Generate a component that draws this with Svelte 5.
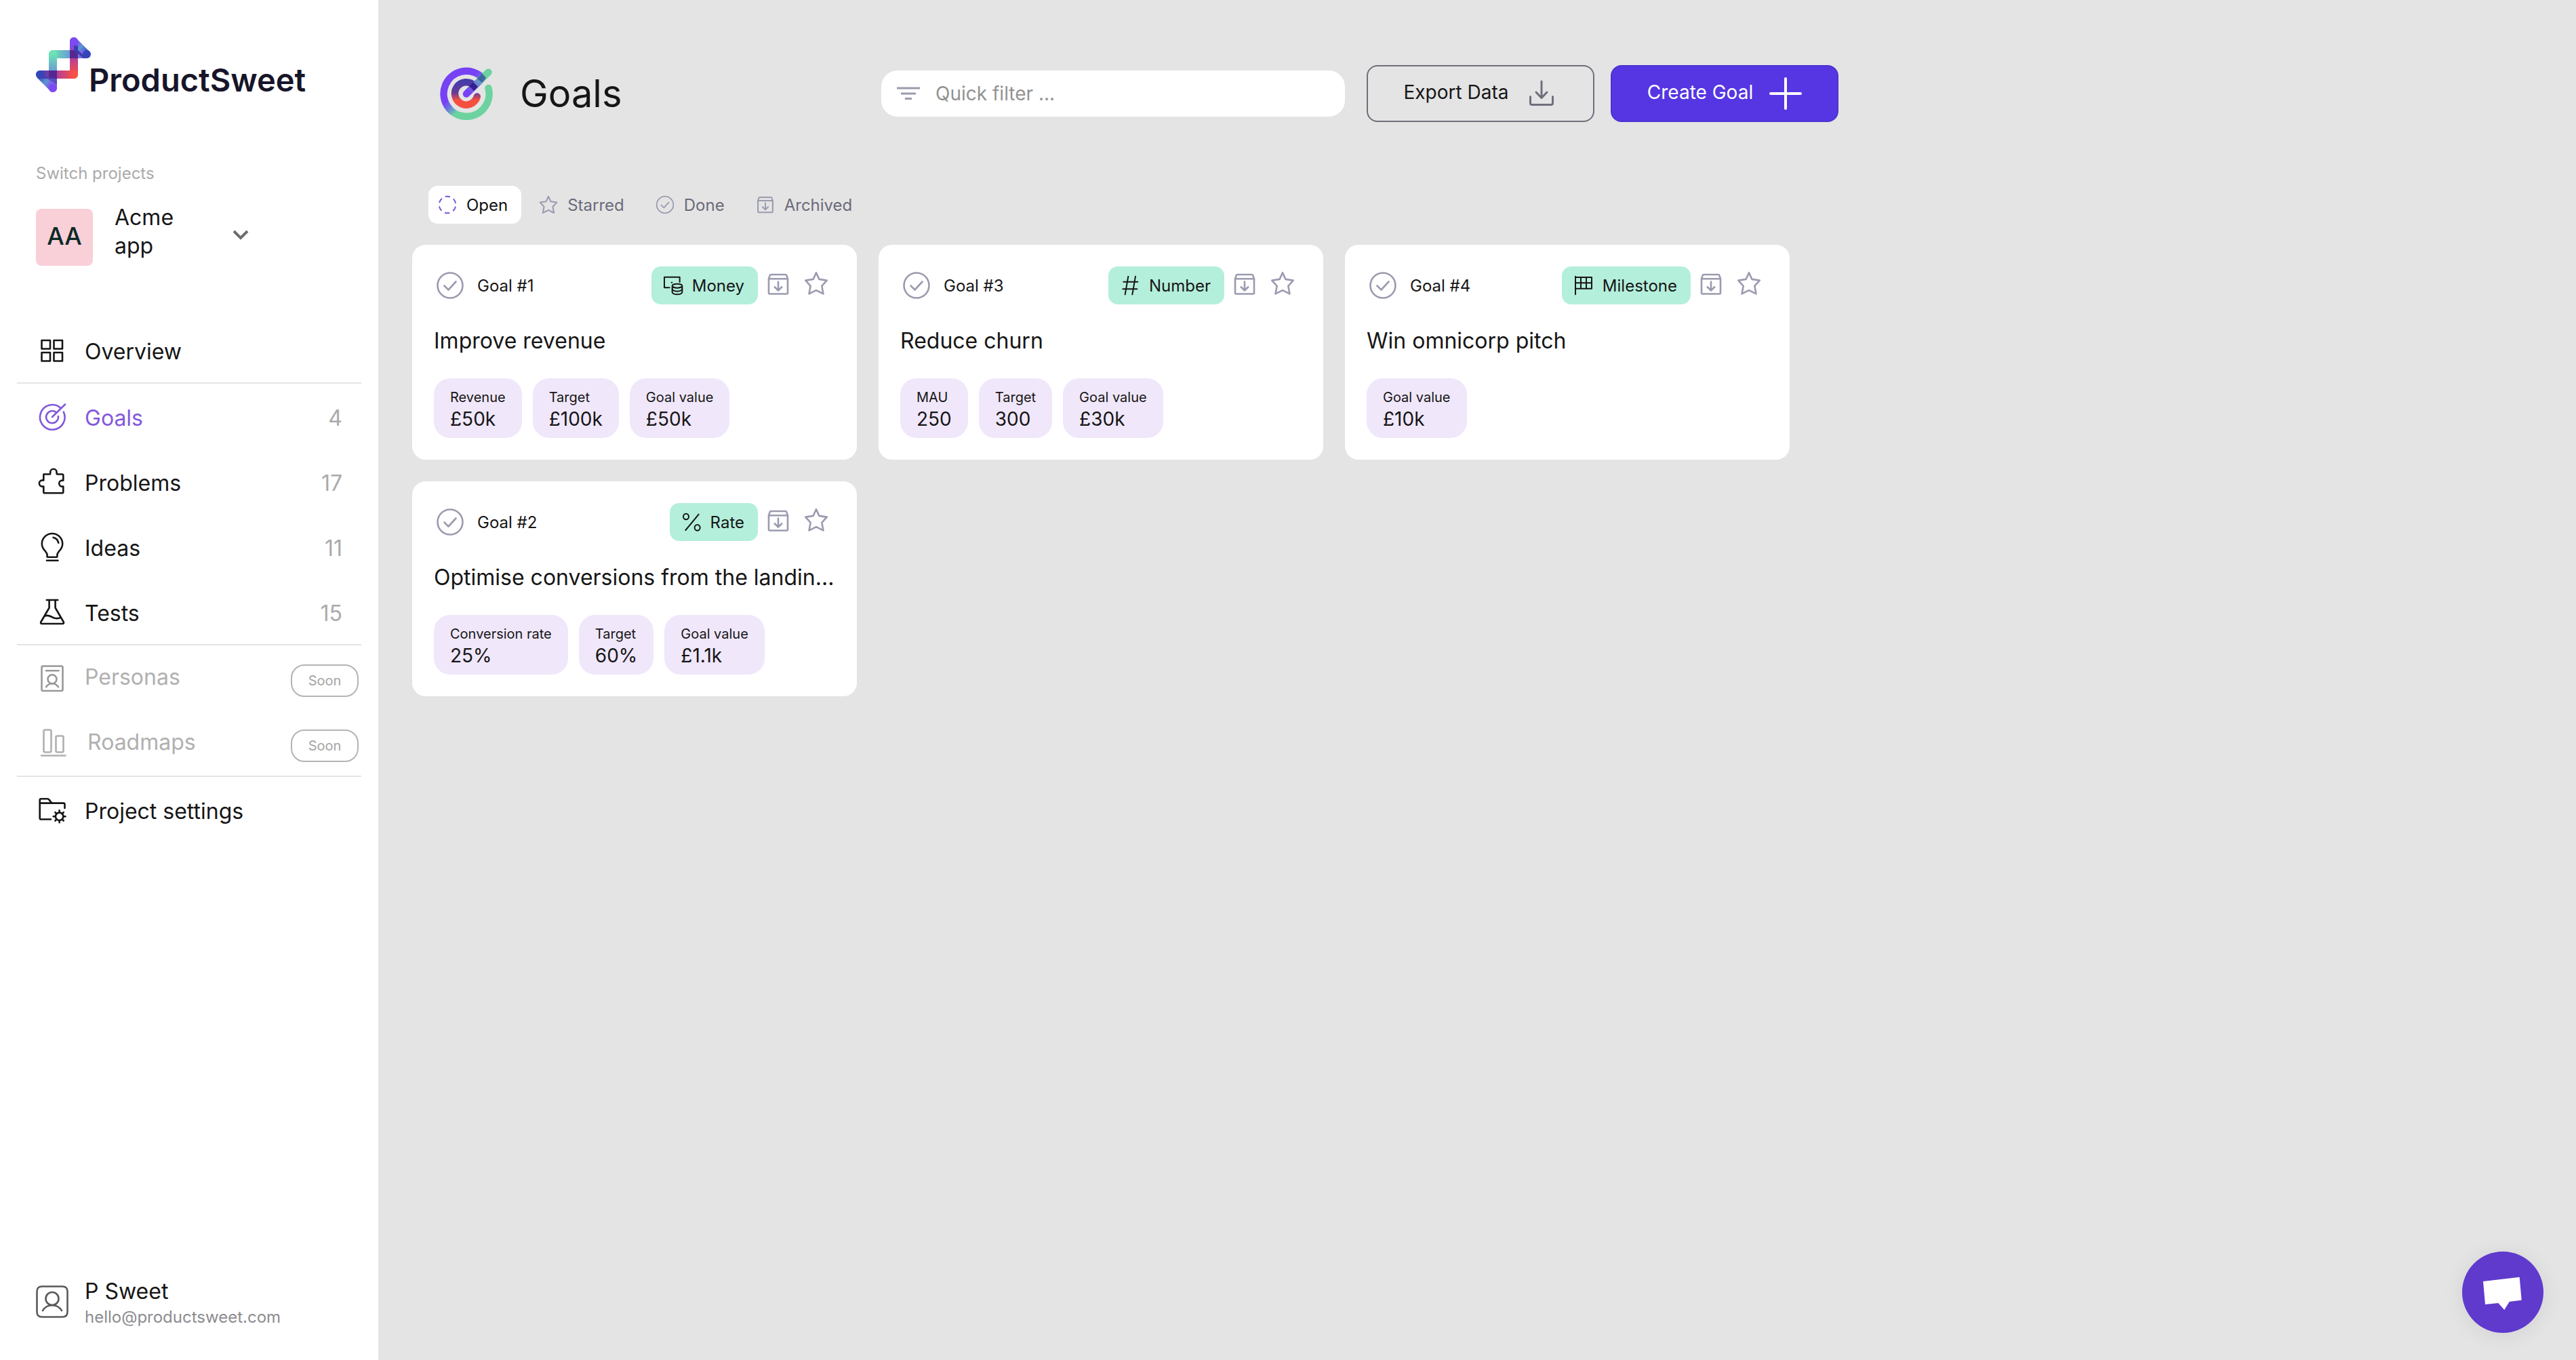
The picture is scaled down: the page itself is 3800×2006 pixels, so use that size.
<script>
  // Line icons, drawn on a 48px grid
  const icons = {
    overview: [
      'M8.5 8h12.5v12.5h-12.5z', 'M26.5 8h12.5v12.5h-12.5z',
      'M8.5 26h12.5v12.5h-12.5z', 'M26.5 26h12.5v12.5h-12.5z'
    ],
    goals: [
      'M36 9.4A18.3 18.3 0 1 0 40.8 15.6',
      'M29.4 15.8A9 9 0 1 0 33 22',
      'M24 23L43 4.5'
    ],
    problems: [
      'M11.5 11.5h8.5q1.2 0 1.2 -1.2v-1.8a4.7 4.7 0 0 1 9.4 0v1.8q0 1.2 1.2 1.2h7q1.5 0 1.5 1.5v7.6h-1.6a4.5 4.5 0 0 0 0 9h1.6v8.1q0 1.5 -1.5 1.5h-26q-1.5 0 -1.5 -1.5v-8.1h-1.8a4.6 4.6 0 0 1 0 -9.2h1.8v-7.7q0 -1.2 1.2 -1.2z'
    ],
    ideas: [
      'M16.6 37.5V34q0 -1.5 -2.6 -4.8C10.500 25.500 8.800 22.500 8.800 18.200A15.200 15.200 0 0 1 39.200 18.200C39.200 22.500 37.500 25.500 34 29.200Q31.400 32.500 31.400 34V36.500q0 1.200 -1.200 1.200H17.800q-1.200 0 -1.200 -1.200',
      'M16 42.700h16.500',
      'M25.500 8.800q6.500 1.500 7.800 8'
    ],
    tests: [
      'M15.800 5h16.500',
      'M19.600 5v11.500L7.300 37.500q-.9 2.500 1.500 2.500h30.500q2.400 0 1.500 -2.500L28.600 16.500V5',
      'M13.500 28.500c6 -2.500 9 2 14 3.200q4 .9 7.500 -.3'
    ],
    personas: [
      'M10.500 8.500h27q2 0 2 2v32.500q0 2 -2 2h-27q-2 0 -2 -2v-32.500q0 -2 2 -2z',
      'M15 15.200h18.500',
      'M17.500 27.800a6.500 6.500 0 1 0 13 0a6.500 6.500 0 1 0 -13 0',
      'M15 39.200q3.500 -5 9 -5t9 5'
    ],
    roadmaps: [
      'M13.500 6.500h7q2 0 2 2v29q0 2 -2 2h-7q-2 0 -2 -2v-29q0 -2 2 -2z',
      'M31.500 15.500h7q2 0 2 2v20q0 2 -2 2h-7q-2 0 -2 -2v-20q0 -2 2 -2z',
      'M8 44.500h35.500'
    ],
    settings: [
      'M22 36.500H7.500q-1.800 0 -1.800 -1.800V8q0 -1.800 1.800 -1.800h9.500q1.500 0 2.500 1.400l3.800 5',
      'M6 12.600h34.500q2 0 2 2V20',
      'M28.900 32.300a5.700 5.700 0 1 0 11.400 0a5.700 5.700 0 1 0 -11.400 0',
      'M34.600 26.500v-3.200M34.600 38v3.200M28.900 32.300h-3.200M40.300 32.300h3.200M30.600 28.300l-2.200 -2.200M38.600 28.300l2.200 -2.200M30.600 36.300l-2.200 2.200M38.600 36.300l2.200 2.200'
    ],
    user: [
      'M9 1.500h30q7.500 0 7.500 7.500v30q0 7.500 -7.500 7.500h-30q-7.500 0 -7.500 -7.500v-30q0 -7.500 7.500 -7.500z',
      'M14.500 19.500a9.500 9.500 0 1 0 19 0a9.500 9.500 0 1 0 -19 0',
      'M10 37.200q4.500 -8 14 -8t14 8'
    ],
    open: ['M42.500 24a18.500 18.500 0 1 1 -37 0a18.500 18.500 0 1 1 37 0'],
    check: [
      'M42.500 24a18.500 18.500 0 1 1 -37 0a18.500 18.500 0 1 1 37 0',
      'M15.500 24.500l6 6l11 -12'
    ],
    archive: [
      'M10 14.300h28V35q0 1.500 -1.500 1.500h-25q-1.500 0 -1.500 -1.500z',
      'M10 14.300l1.700 -5.100q.4 -1.200 1.700 -1.200h21.200q1.300 0 1.700 1.200l1.700 5.100',
      'M24 18.500v12.500M18.700 26.300l5.300 5.200l5.300 -5.200'
    ],
    star: [
      'M24 5.200L28.400 14.900L39.700 16.600L32.300 24.800L34.500 36.400L24 31.200L13.500 36.400L15.700 24.800L8.300 16.600L19.600 14.900z'
    ],
    money: [
      'M16 29H4.500V5.500h34v11',
      'M20.500 17.500h1',
      'M22 25a11 4.500 0 1 0 22 0a11 4.500 0 1 0 -22 0v14a11 5 0 0 0 22 0v-14',
      'M22 32a11 5 0 0 0 22 0'
    ],
    number: ['M20 4l-7 40M36 4l-7 40M9.500 16h31.500M8 32h31.500'],
    rate: [
      'M40 7L11 42',
      'M6 12a6 6.500 0 1 0 12 0a6 6.500 0 1 0 -12 0',
      'M31 36.500a6 6.500 0 1 0 12 0a6 6.500 0 1 0 -12 0'
    ],
    milestone: ['M6 4v40M6 6h36v25H6M18 6v25M30 6v25M6 18.500h36'],
    export: ['M24 6v24M16 22l8 8.500l8 -8.500', 'M7.500 28.500V38q0 2.500 2.500 2.500h28q2.500 0 2.500 -2.500v-9.500'],
    plus: ['M24 2v44M2 24h44'],
    filter: ['M1 12h34M7 20h22M13 27.500h10']
  };

  const nav = [
    { icon: 'overview', label: 'Overview', line: true },
    { icon: 'goals', label: 'Goals', count: 4, active: true },
    { icon: 'problems', label: 'Problems', count: 17 },
    { icon: 'ideas', label: 'Ideas', count: 11 },
    { icon: 'tests', label: 'Tests', count: 15, line: true },
    { icon: 'personas', label: 'Personas', soon: true },
    { icon: 'roadmaps', label: 'Roadmaps', soon: true, line: true },
    { icon: 'settings', label: 'Project settings' }
  ];

  const tabs = [
    { icon: 'open', label: 'Open', box: '3 3 42 42' },
    { icon: 'star', label: 'Starred', box: '6 3 36 36' },
    { icon: 'check', label: 'Done', box: '3 3 42 42' },
    { icon: 'archive', label: 'Archived', box: '6 4 36 36' }
  ];

  const goals = [
    {
      id: 1, type: 'Money', icon: 'money', title: 'Improve revenue',
      stats: [['Revenue', '£50k'], ['Target', '£100k'], ['Goal value', '£50k']]
    },
    {
      id: 3, type: 'Number', icon: 'number', title: 'Reduce churn',
      stats: [['MAU', '250'], ['Target', '300'], ['Goal value', '£30k']]
    },
    {
      id: 4, type: 'Milestone', icon: 'milestone', title: 'Win omnicorp pitch',
      stats: [['Goal value', '£10k']]
    },
    {
      id: 2, type: 'Rate', icon: 'rate', title: 'Optimise conversions from the landin...',
      stats: [['Conversion rate', '25%'], ['Target', '60%'], ['Goal value', '£1.1k']]
    }
  ];

  let current = $state('Open');
  let search = $state('');
</script>

{#snippet icon(name, box = '0 0 48 48')}
  <svg class="icon {name}" viewBox={box} aria-hidden="true">
    {#each icons[name] as d}
      <path {d} />
    {/each}
  </svg>
{/snippet}

<div class="app">
  <aside>
    <a class="logo" href="#home">
      <svg viewBox="0 0 82 82" aria-hidden="true">
        <defs>
          <linearGradient id="l1" gradientUnits="userSpaceOnUse" x1="25" y1="25" x2="75" y2="25">
            <stop offset="0" stop-color="#6be3b4" /><stop offset=".5" stop-color="#6a9bd4" /><stop offset="1" stop-color="#8050f0" />
          </linearGradient>
          <linearGradient id="l2" gradientUnits="userSpaceOnUse" x1="25" y1="25" x2="25" y2="75">
            <stop offset="0" stop-color="#6be3b4" /><stop offset=".5" stop-color="#6a9bd4" /><stop offset="1" stop-color="#8050f0" />
          </linearGradient>
          <linearGradient id="l3" gradientUnits="userSpaceOnUse" x1="56" y1="6" x2="56" y2="55">
            <stop offset=".1" stop-color="#7c4af0" /><stop offset=".5" stop-color="#b43f9c" /><stop offset="1" stop-color="#fa5040" />
          </linearGradient>
          <linearGradient id="l4" gradientUnits="userSpaceOnUse" x1="6" y1="55" x2="56" y2="55">
            <stop offset="0" stop-color="#3440b0" /><stop offset=".5" stop-color="#b43f9c" /><stop offset="1" stop-color="#fa5040" />
          </linearGradient>
          <linearGradient id="l5" gradientUnits="userSpaceOnUse" x1="56" y1="6" x2="75" y2="25">
            <stop offset="0" stop-color="#7c4af0" /><stop offset=".5" stop-color="#5f93d6" /><stop offset="1" stop-color="#3346b8" />
          </linearGradient>
          <linearGradient id="l6" gradientUnits="userSpaceOnUse" x1="6" y1="55" x2="25" y2="75">
            <stop offset="0" stop-color="#3346b8" /><stop offset=".5" stop-color="#5f93d6" /><stop offset="1" stop-color="#7c4af0" />
          </linearGradient>
        </defs>
        <path d="M50 6L71 29L79 21L60 2z" fill="url(#l5)" />
        <path d="M2 60L21 79L31 75L31 69L11 51z" fill="url(#l6)" />
        <g fill="none" stroke-width="12" stroke-linecap="round">
          <path d="M25 25H72" stroke="url(#l1)" />
          <path d="M25 25L25.010 75" stroke="url(#l2)" />
          <path d="M56 6L56.010 55" stroke="url(#l3)" />
          <path d="M56 55L6 55.010" stroke="url(#l4)" />
        </g>
        <path d="M50 19h12v12h-12zM19 49h12v12h-12z" fill="#552890" />
        <path d="M56 12L62 13V19L75 31H70L56 19z" fill="#3a3fae" />
        <path d="M6 55L31 61V70L25 66z" fill="#4a3fb0" opacity=".7" />
        <circle cx="56" cy="6" r="6" fill="#7c4af0" />
        <circle cx="75" cy="25" r="6" fill="#3346b8" />
        <circle cx="6" cy="55" r="6" fill="#3346b8" />
        <circle cx="25" cy="75" r="6" fill="#7c4af0" />
      </svg>
      <span>ProductSweet</span>
    </a>

    <p class="hint">Switch projects</p>
    <button class="project">
      <span class="avatar">AA</span>
      <span class="name">Acme app</span>
      <svg class="chevron" viewBox="0 0 24 24" aria-hidden="true"><path d="M2 7l10 10l10 -10" /></svg>
    </button>

    <nav>
      {#each nav as item}
        <a href="#{item.icon}" class:active={item.active} class:soon={item.soon} class:line={item.line}>
          {@render icon(item.icon)}
          <span class="label">{item.label}</span>
          {#if item.count}<span class="count">{item.count}</span>{/if}
          {#if item.soon}<span class="badge">Soon</span>{/if}
        </a>
      {/each}
    </nav>

    <a class="account" href="#account">
      {@render icon('user')}
      <span>
        <strong>P Sweet</strong>
        <small>hello@productsweet.com</small>
      </span>
    </a>
  </aside>

  <main>
    <header>
      <h1>
        <svg viewBox="0 0 78 78" aria-hidden="true">
          <defs>
            <linearGradient id="t1" gradientUnits="userSpaceOnUse" x1="15" y1="40" x2="45" y2="72">
              <stop offset=".1" stop-color="#7742f5" /><stop offset=".35" stop-color="#6c84d8" /><stop offset=".6" stop-color="#6cd3a0" />
            </linearGradient>
            <linearGradient id="t2" gradientUnits="userSpaceOnUse" x1="38" y1="20" x2="38" y2="56">
              <stop offset=".1" stop-color="#4a3ca8" /><stop offset=".5" stop-color="#6a3a98" /><stop offset=".8" stop-color="#f5503f" />
            </linearGradient>
            <linearGradient id="t3" gradientUnits="userSpaceOnUse" x1="39" y1="40" x2="71" y2="6">
              <stop offset=".1" stop-color="#7742f5" /><stop offset=".55" stop-color="#6693c8" /><stop offset=".8" stop-color="#6cd3a0" />
            </linearGradient>
          </defs>
          <g fill="none" stroke-width="10.500" stroke-linecap="round">
            <path d="M71.500 31A33.500 33.500 0 1 1 61 14" stroke="url(#t1)" />
            <path d="M54.800 43.500A16.700 16.700 0 1 1 50.500 27" stroke="url(#t2)" />
            <path d="M39 39.500L71.500 7.500" stroke="url(#t3)" />
          </g>
          <path d="M62 9L68 16L62 23L55 17z" fill="#35589f" opacity=".85" />
          <path d="M49 22L56 29L50 35L43 28z" fill="#35208c" />
        </svg>
        Goals
      </h1>
      <label class="search">
        <svg class="icon" viewBox="0 0 36 40" aria-hidden="true"><path d={icons.filter[0]} /></svg>
        <input type="text" placeholder="Quick filter ..." aria-label="Quick filter" bind:value={search} />
      </label>
      <div class="buttons">
        <button class="btn"><span>Export Data</span>{@render icon('export')}</button>
        <button class="btn primary"><span>Create Goal</span>{@render icon('plus')}</button>
      </div>
    </header>

    <div class="tabs">
      {#each tabs as tab}
        <button class:selected={current === tab.label} onclick={() => (current = tab.label)}>
          {@render icon(tab.icon, tab.box)}
          {tab.label}
        </button>
      {/each}
    </div>

    <div class="cards">
      {#each goals as goal}
        <article>
          <div class="top">
            <button class="tool" aria-label="Mark as done">{@render icon('check')}</button>
            <span class="id">Goal #{goal.id}</span>
            <span class="chip">{@render icon(goal.icon, '3 3 42 42')}{goal.type}</span>
            <div class="tools">
              <button class="tool" aria-label="Archive">{@render icon('archive')}</button>
              <button class="tool" aria-label="Star">{@render icon('star')}</button>
            </div>
          </div>
          <h2>{goal.title}</h2>
          <div class="stats">
            {#each goal.stats as [label, value]}
              <div class="stat"><small>{label}</small><b>{value}</b></div>
            {/each}
          </div>
        </article>
      {/each}
    </div>
  </main>

  <button class="chat" aria-label="Chat">
    <svg viewBox="0 0 120 120" aria-hidden="true">
      <path d="M31 44L84.700 37.700L87.700 71.700L69.700 74L62.300 86L53.300 76L34 78z" />
    </svg>
  </button>
</div>

<style>
  :global(body) {
    background: #e4e4e4;
  }
  .app {
    display: flex;
    min-height: 100vh;
    font-family: Inter, "Liberation Sans", sans-serif;
    font-size: 32px;
    color: #161616;
  }
  .app * {
    box-sizing: border-box;
  }
  button, input {
    font: inherit;
    color: inherit;
    border: none;
    background: none;
    padding: 0;
  }
  button {
    cursor: pointer;
  }
  a {
    color: inherit;
    text-decoration: none;
  }
  svg {
    display: block;
    flex: none;
  }
  .icon {
    width: 48px;
    height: 48px;
    fill: none;
    stroke: currentColor;
    stroke-width: 2.6;
    stroke-linecap: round;
    stroke-linejoin: round;
  }

  aside {
    display: flex;
    flex-direction: column;
    flex: none;
    width: 558px;
    padding: 55px 25px 46px;
    background: #fff;
  }
  .logo {
    display: flex;
    height: 87px;
    padding-left: 28px;
    font-size: 47px;
    font-weight: 600;
    line-height: 48px;
    color: #17152a;
  }
  .logo svg {
    width: 82px;
    height: 82px;
  }
  .logo span {
    align-self: flex-end;
    margin-left: -4px;
  }
  .hint {
    margin: 98px 0 28px;
    padding-left: 28px;
    font-size: 24px;
    line-height: 32px;
    color: #aaa;
  }
  .project {
    display: flex;
    align-items: flex-start;
    height: 92px;
    padding-left: 28px;
    margin-bottom: 76px;
    text-align: left;
  }
  .avatar {
    align-self: flex-end;
    width: 84px;
    height: 84px;
    border-radius: 8px;
    background: #f9d0d8;
    color: #0a2a26;
    font-size: 36px;
    font-weight: 500;
    line-height: 80px;
    text-align: center;
  }
  .name {
    width: 120px;
    margin-left: 32px;
    line-height: 42px;
  }
  .chevron {
    align-self: center;
    width: 24px;
    height: 24px;
    margin-left: 54px;
    fill: none;
    stroke: #6c6c6c;
    stroke-width: 4;
  }
  nav {
    display: flex;
    flex-direction: column;
  }
  nav a {
    display: flex;
    align-items: center;
    gap: 24px;
    height: 96px;
    padding: 4px 28px 0 28px;
  }
  nav a.line {
    height: 98px;
    border-bottom: 2px solid #e4e4e4;
  }
  nav a.soon {
    padding: 0 4px 4px 28px;
    color: #b0b0b0;
  }
  nav .roadmaps {
    margin-right: 4px;
  }
  nav .personas {
    color: #989898;
  }
  .active {
    color: #8359dc;
  }
  .count {
    margin-left: auto;
    color: #aaa;
  }
  .badge {
    width: 100px;
    height: 48px;
    margin: 12px 0 0 auto;
    border: 2px solid #b4b4b4;
    border-radius: 20px;
    font-size: 20px;
    font-weight: 400;
    line-height: 44px;
    text-align: center;
    color: #a4a4a4;
  }
  .account {
    display: flex;
    align-items: center;
    gap: 24px;
    margin-top: auto;
    padding-left: 28px;
  }
  .account .icon {
    margin-bottom: 4px;
    color: #5a5a5a;
  }
  .account strong, .account small {
    display: block;
    font-weight: 400;
    font-size: 32px;
    line-height: 42px;
  }
  .account small {
    font-size: 24px;
    line-height: 34px;
    color: #8c8c90;
  }

  main {
    flex: 1;
    min-width: 0;
    padding: 96px 50px 50px;
  }
  header {
    display: flex;
    align-items: center;
    max-width: 2104px;
  }
  h1 {
    display: flex;
    align-items: center;
    flex: 1;
    gap: 40px;
    margin: 0;
    padding-left: 41px;
    font-size: 56px;
    font-weight: 400;
    line-height: 84px;
  }
  h1 svg {
    width: 78px;
    height: 78px;
  }
  .search {
    display: flex;
    align-items: center;
    flex: 0 1 684px;
    height: 68px;
    margin-right: 32px;
    padding: 0 22px;
    gap: 22px;
    border-radius: 24px;
    background: #fff;
  }
  .search .icon {
    width: 36px;
    height: 40px;
    color: #9b9bb0;
    stroke-width: 3;
    stroke-linecap: butt;
  }
  .search input {
    flex: 1;
    min-width: 0;
    font-size: 28px;
    outline: none;
  }
  .search input::placeholder {
    color: #929292;
    opacity: 1;
  }
  .buttons {
    display: flex;
    gap: 24px;
  }
  .btn {
    display: flex;
    align-items: center;
    justify-content: center;
    gap: 24px;
    width: 336px;
    height: 84px;
    border: 2px solid #6f6f7c;
    border-radius: 16px;
    font-size: 28px;
  }
  .btn span {
    padding-bottom: 4px;
  }
  .btn .icon {
    color: #6f6f7c;
    stroke-width: 3;
  }
  .btn.primary {
    border-color: #4f33d0;
    background: #5536e2;
    color: #fff;
  }
  .btn.primary .icon {
    color: #fff;
    stroke-width: 4;
  }

  .tabs {
    display: flex;
    gap: 12px;
    margin: 94px 0 31px 24px;
  }
  .tabs button {
    display: flex;
    align-items: center;
    gap: 14px;
    height: 56px;
    padding: 0 20px 0 14px;
    border-radius: 14px;
    font-size: 24px;
    color: #6b6b7a;
  }
  .tabs .icon {
    width: 28px;
    height: 28px;
    color: #9b9bb0;
  }
  .tabs .selected {
    background: #fff;
    color: #111;
  }
  .tabs .open {
    color: #7b52e0;
    stroke-width: 3;
    stroke-dasharray: 11 8.370;
    stroke-dashoffset: 15;
    stroke-linecap: butt;
  }

  .cards {
    display: grid;
    grid-template-columns: repeat(3, 1fr);
    gap: 32px;
    max-width: 2032px;
  }
  article {
    min-width: 0;
    padding: 32px;
    border-radius: 20px;
    background: #fff;
  }
  .top {
    display: flex;
    align-items: center;
    height: 56px;
    font-size: 24px;
  }
  .id {
    margin-left: 16px;
  }
  .tool {
    color: #9b9bb0;
  }
  .tools {
    display: flex;
    gap: 8px;
    padding: 0 4px 0 6px;
  }
  .chip {
    display: flex;
    align-items: center;
    gap: 14px;
    height: 56px;
    margin-left: auto;
    padding: 0 20px 0 18px;
    border-radius: 14px;
    background: #b4efdc;
  }
  .chip .icon {
    width: 28px;
    height: 28px;
    overflow: visible;
    stroke-width: 3;
  }
  h2 {
    margin: 34px 0 35px;
    font-size: 32px;
    font-weight: 400;
    line-height: 40px;
    white-space: nowrap;
  }
  .stats {
    display: flex;
    gap: 16px;
  }
  .stat {
    height: 88px;
    padding: 14px 24px 10px;
    border-radius: 24px;
    background: #f0e7fa;
  }
  .stat small {
    display: block;
    font-size: 20px;
    line-height: 28px;
  }
  .stat b {
    display: block;
    font-size: 28px;
    font-weight: 400;
    line-height: 36px;
  }

  .chat {
    position: fixed;
    right: 48px;
    bottom: 40px;
    width: 120px;
    height: 120px;
    border-radius: 50%;
    background: #5f3acc;
    box-shadow: 0 4px 32px rgba(0, 0, 0, 0.08);
  }
  .chat path {
    fill: #fff;
  }
</style>
